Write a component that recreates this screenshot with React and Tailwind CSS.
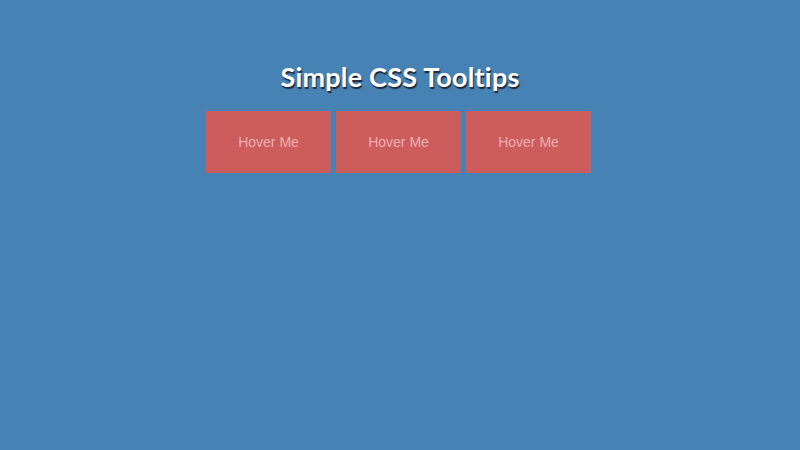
import React from 'react';

const items = ['Hover Me', 'Hover Me', 'Hover Me'];

export default function App() {
    return (
        <div className="min-h-screen w-full bg-[#4682b4] pt-[59px]">
            <h1
                className="text-center text-[27px] leading-[36px] font-bold tracking-[0.2px] text-white [text-shadow:1px_2px_1px_#1f2937]"
                style={{ fontFamily: 'Lato, "Noto Sans", sans-serif' }}
            >
                Simple CSS Tooltips
            </h1>

            {/* Tooltip triggers */}
            <div className="mt-[16px] flex justify-center gap-[5px] pr-[3px]">
                {items.map((label, i) => (
                    <div
                        key={i}
                        className="flex h-[62px] w-[125px] items-center justify-center pt-[1px] bg-[#cd5c5c] text-[14px] text-[#eeb1b1]"
                        style={{ fontFamily: '"Liberation Sans", Arial, sans-serif' }}
                    >
                        {label}
                    </div>
                ))}
            </div>
        </div>
    );
}
